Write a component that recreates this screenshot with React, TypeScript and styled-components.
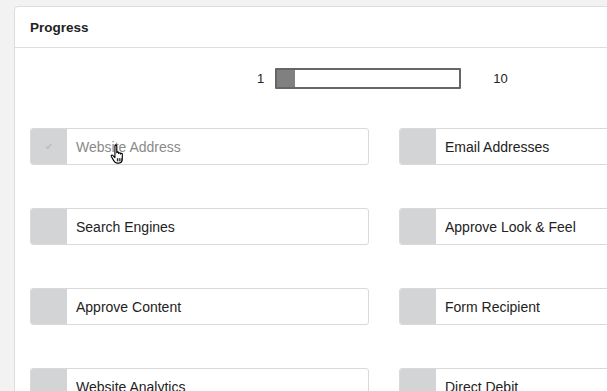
import styled, { createGlobalStyle } from 'styled-components';

const GlobalStyle = createGlobalStyle`
  html, body {
    margin: 0;
    padding: 0;
    background: #f2f2f2;
    overflow: hidden;
    font-family: "Liberation Sans", Arial, Helvetica, sans-serif;
    color: #333;
  }
`;

const Page = styled.div`
  padding: 6px 0 0 14px;
  width: 760px;
`;

const Panel = styled.section`
  background: #fff;
  border: 1px solid #dddddd;
  border-radius: 4px;
  width: 740px;
  height: 420px;
`;

const PanelHeader = styled.div`
  height: 40px;
  display: flex;
  align-items: center;
  padding: 0 15px;
  border-bottom: 1px solid #dddddd;
  font-size: 13.5px;
  font-weight: bold;
  color: #222;
`;

const PanelBody = styled.div`
  padding: 20px 15px 15px;
`;

const ProgressRow = styled.div`
  display: flex;
  align-items: center;
  padding-left: 216px;
  height: 21px;
  font-size: 13px;
  color: #222;
`;

const Bound = styled.span<{ $gap: number }>`
  margin: 0 ${(p) => p.$gap}px;
`;

const Track = styled.div`
  width: 182px;
  height: 17px;
  border: 2px solid #666;
  border-radius: 1px;
  background: #fff;
`;

const Fill = styled.div`
  height: 100%;
  background: #808080;
`;

const TaskGrid = styled.div`
  display: grid;
  grid-template-columns: 339px 339px;
  column-gap: 30px;
  row-gap: 43px;
  margin-top: 39px;
`;

const Task = styled.div<{ $done?: boolean }>`
  position: relative;
  display: flex;
  height: 35px;
  border: 1px solid #d9d9d9;
  border-radius: 3px;
  overflow: hidden;
  font-size: 14px;
  color: ${(p) => (p.$done ? '#8a8a8a' : '#222')};
`;

const CheckBox = styled.div`
  width: 36px;
  flex: none;
  background: #d3d4d6;
  display: flex;
  align-items: center;
  justify-content: center;
  color: #bdbdbd;
  font-size: 10px;
`;

const TaskLabel = styled.div`
  display: flex;
  align-items: center;
  padding-left: 9px;
`;

const Pointer = styled.svg`
  position: absolute;
  left: 79px;
  top: 15px;
  width: 16px;
  height: 21px;
`;

const tasks = [
  'Website Address',
  'Email Addresses',
  'Search Engines',
  'Approve Look & Feel',
  'Approve Content',
  'Form Recipient',
  'Website Analytics',
  'Direct Debit',
];

export default function App() {
  const current = 1;
  const total = 10;
  return (
    <>
      <GlobalStyle />
      <Page>
        <Panel>
          <PanelHeader>Progress</PanelHeader>
          <PanelBody>
            <ProgressRow>
              <Bound $gap={11}>{current}</Bound>
              <Track>
                <Fill style={{ width: `${(current / total) * 100}%` }} />
              </Track>
              <Bound $gap={32}>{total}</Bound>
            </ProgressRow>
            <TaskGrid>
              {tasks.map((t, i) => (
                <Task key={t} $done={i === 0}>
                  <CheckBox>{i === 0 ? '✔' : ''}</CheckBox>
                  <TaskLabel>{t}</TaskLabel>
                  {i === 0 && (
                    <Pointer viewBox="0 0 13 17">
                      <path
                        d="M4 1.5c0-.8 1.5-.8 1.5 0V7c0-.7 1.5-.7 1.5 0v.6c0-.7 1.5-.7 1.5 0v.5c0-.7 1.5-.7 1.5 0V12c0 2-1 3.5-3 3.5H6c-1.5 0-2.3-.8-3-2L1 10c-.4-.8.7-1.5 1.3-.8L4 11z"
                        fill="#fff"
                        stroke="#000"
                        strokeWidth="0.9"
                        strokeLinejoin="round"
                      />
                      <path d="M6 11.5v2.5M7.5 11.5v2.5M9 11.5v2.5" stroke="#000" strokeWidth="0.8" />
                    </Pointer>
                  )}
                </Task>
              ))}
            </TaskGrid>
          </PanelBody>
        </Panel>
      </Page>
    </>
  );
}
